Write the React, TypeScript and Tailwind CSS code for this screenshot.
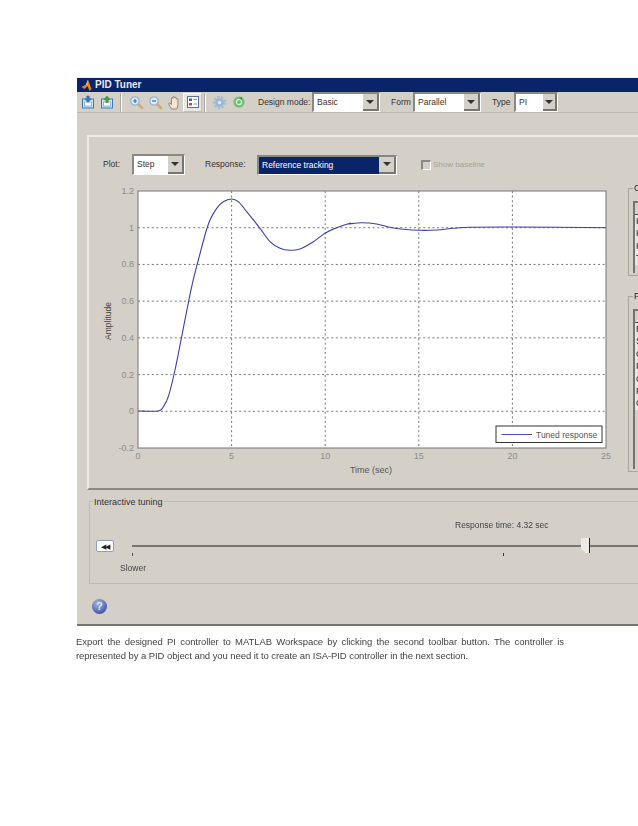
const zoomA: [number, number][] = [[205,693],[265,693],[280,680],[295,650],[315,570],[335,470],[365,320],[385,240],[405,165],[420,120],[440,85],[460,65],[485,57],[505,65],[530,95],[570,145],[600,185],[630,205],[660,211],[690,207],[730,185],[765,160],[800,143],[840,130]];
const zoomB: [number, number][] = [[25,132],[65,128],[110,132],[150,142],[190,148],[240,151],[290,150],[340,145],[390,142],[520,141],[798,143]];
// plot coordinates relative to the svg, whose top-left is page (93,181)
const curve: [number, number][] = [
  ...zoomA.map(([x, y]) => [70 + x / 3 - 93, 180 + y / 3 - 181] as [number, number]),
  ...zoomB.map(([x, y]) => [340 + x / 3 - 93, 180 + y / 3 - 181] as [number, number]),
];
function smooth(p: [number, number][]) {
  let d = `M${p[0][0].toFixed(1)} ${p[0][1].toFixed(1)}`;
  for (let i = 0; i < p.length - 1; i++) {
    const a = p[Math.max(i - 1, 0)], b = p[i], c = p[i + 1], e = p[Math.min(i + 2, p.length - 1)];
    d += `C${(b[0] + (c[0] - a[0]) / 6).toFixed(1)} ${(b[1] + (c[1] - a[1]) / 6).toFixed(1)} ${(c[0] - (e[0] - b[0]) / 6).toFixed(1)} ${(c[1] - (e[1] - b[1]) / 6).toFixed(1)} ${c[0].toFixed(1)} ${c[1].toFixed(1)}`;
  }
  return d;
}
const L = 45, T = 10, W = 468, H = 257;
const xt = [0, 5, 10, 15, 20, 25];
const yt = ["1.2", "1", "0.8", "0.6", "0.4", "0.2", "0", "-0.2"];

function Chart() {
  return (
    <svg width="535" height="299" className="shrink-0" style={{ fontFamily: "'Liberation Sans', sans-serif" }}>
      <rect x={L} y={T} width={W} height={H} fill="#fff" stroke="#777" strokeWidth="1" />
      {xt.slice(1, 5).map((t, i) => {
        const x = L + (W / 5) * (i + 1);
        return <line key={t} x1={x} x2={x} y1={T} y2={T + H} stroke="#777" strokeDasharray="2 2.6" />;
      })}
      {yt.slice(1, 7).map((_, i) => {
        const y = T + (H / 7) * (i + 1);
        return <line key={i} x1={L} x2={L + W} y1={y} y2={y} stroke="#777" strokeDasharray="2 2.6" />;
      })}
      {xt.map((t, i) => (
        <text key={t} x={L + (W / 5) * i} y={T + H + 11} fontSize="9" fill="#8c8c8c" textAnchor="middle">{t}</text>
      ))}
      {yt.map((t, i) => (
        <text key={t} x={L - 4} y={T + (H / 7) * i + 3} fontSize="9" fill="#8c8c8c" textAnchor="end">{t}</text>
      ))}
      <text x={L + W / 2 - 1} y={292} fontSize="9" fill="#555" textAnchor="middle">Time (sec)</text>
      <text transform="translate(18 140) rotate(-90)" fontSize="8.5" fill="#444" textAnchor="middle">Amplitude</text>
      <path d={smooth(curve)} fill="none" stroke="#3d3fa8" strokeWidth="1.1" />
      <rect x={403} y={245} width={106} height={16.5} fill="#fff" stroke="#333" />
      <line x1={408.5} x2={439} y1={253.5} y2={253.5} stroke="#4a4cc0" strokeWidth="1" />
      <text x={443} y={257} fontSize="8.5" fill="#555">Tuned response</text>
    </svg>
  );
}

function Combo({ label, w, a, sel, h = "h-[20px]" }: { label: string; w: string; a: string; sel?: boolean; h?: string }) {
  return (
    <div className={`flex ${w} ${h} shrink-0 border-t-2 border-l-2 border-t-[#8a8882] border-l-[#8a8882] border-b border-r border-b-white border-r-white ${sel ? "bg-[#d4d0c8]" : "bg-white"}`}>
      <div className={`flex-1 pl-[3px] text-[8.5px] leading-[16px] ${sel ? "bg-[#0a246a] text-white" : "text-[#333]"}`}>{label}</div>
      <div className={`${a} flex items-center justify-center bg-[#d4d0c8] border-r-2 border-b-2 border-r-[#77756f] border-b-[#77756f]`}>
        <div className="w-0 h-0 border-l-[4px] border-r-[4px] border-t-[4px] border-l-transparent border-r-transparent border-t-[#333]" />
      </div>
    </div>
  );
}

function Sep({ ml, mr }: { ml: string; mr: string }) {
  return <div className={`w-[2px] h-[19px] shrink-0 ${ml} ${mr} border-l border-l-[#a9a69f] border-r border-r-white`} />;
}

function ExportIcon({ up }: { up?: boolean }) {
  return (
    <svg width="14" height="14" viewBox="0 0 14 14" className="shrink-0">
      <rect x="1.5" y="4" width="11" height="9" fill="#cfe3f5" stroke="#3b78b5" />
      <rect x="3.5" y="7" width="7" height="4" fill="#fff" stroke="#6d9cc9" strokeWidth="0.7" />
      <path d={up ? "M7 1L10 4.5H8.2V7.5H5.8V4.5H4Z" : "M5.8 1H8.2V4H10L7 7.5L4 4H5.8Z"} fill={up ? "#4fa63c" : "#2f7fc4"} stroke={up ? "#2f7a24" : "#1f5a99"} strokeWidth="0.5" />
    </svg>
  );
}

function Magnifier({ plus }: { plus?: boolean }) {
  return (
    <svg width="15" height="15" viewBox="0 0 15 15" className="shrink-0">
      <path d="M8.5 8.5L13 13" stroke="#d9a866" strokeWidth="2.6" strokeLinecap="round" />
      <circle cx="6" cy="6" r="4.2" fill="#dcecf8" stroke="#8fb4d0" strokeWidth="1.2" />
      <path d={plus ? "M4 6H8M6 4V8" : "M4 6H8"} stroke="#3f6fb0" strokeWidth="1.2" />
    </svg>
  );
}

function Hand() {
  return (
    <svg width="15" height="15" viewBox="0 0 15 15" className="shrink-0">
      <path d="M4.5 14L1.8 9.2C1.3 8.2 2.6 7.6 3.3 8.4L4.4 9.6V3.4C4.4 2.4 5.8 2.4 5.9 3.4V2.2C5.9 1.1 7.5 1.1 7.6 2.2V3C7.7 2 9.2 2.1 9.2 3.2V4.2C9.4 3.2 10.9 3.4 10.9 4.5V9.5C10.9 11.5 10 13 9.6 14Z" fill="#f4e4d0" stroke="#77706a" strokeWidth="0.8" />
    </svg>
  );
}

function LegendBtn() {
  return (
    <div className="w-[19px] h-[19px] shrink-0 bg-[#e9e7e1] border-t border-l border-t-white border-l-white border-b border-r border-b-[#c2bfb7] border-r-[#c2bfb7] flex items-center justify-center">
      <svg width="12" height="12" viewBox="0 0 12 12">
        <rect x="0.5" y="0.5" width="11" height="11" fill="#fff" stroke="#5d6f9c" />
        <rect x="2" y="2.5" width="3" height="2.5" fill="#3c5fb5" />
        <rect x="2" y="7" width="3" height="2.5" fill="#d2433a" />
        <path d="M6.5 3.5H10M6.5 8H10" stroke="#8490b0" />
      </svg>
    </div>
  );
}

function Gear() {
  return (
    <svg width="15" height="15" viewBox="0 0 15 15" className="shrink-0">
      <circle cx="7.5" cy="7.5" r="5" fill="none" stroke="#a7bedb" strokeWidth="3.4" strokeDasharray="2.2 1.3" />
      <circle cx="7.5" cy="7.5" r="4.3" fill="#9db6d8" />
      <circle cx="7.5" cy="7.5" r="1.8" fill="#dfe8f3" />
    </svg>
  );
}

function GreenIcon() {
  return (
    <svg width="14" height="14" viewBox="0 0 14 14" className="shrink-0">
      <circle cx="7" cy="7" r="5.6" fill="#6fbf73" />
      <circle cx="7" cy="7" r="2.6" fill="none" stroke="#d9efd6" strokeWidth="1.3" />
      <path d="M7 3.5L10 1.6V5Z" fill="#3f9a4a" />
    </svg>
  );
}

function Group({ h, head, rows, mt }: { h: string; head: string; rows: string[]; mt: string }) {
  return (
    <div className={`relative ${h} ${mt} w-[30px] border-t border-l border-b border-[#a9a69f] pl-[4px] pt-[12px] pb-[2px]`}>
      <span className="absolute left-[4px] top-[-6px] bg-[#d4d0c8] px-[1px] text-[9px] leading-[11px] text-[#222]">{head}</span>
      <div className="h-full border-t-2 border-l-2 border-t-[#77756f] border-l-[#77756f] bg-[#d4d0c8]">
        <div className="h-[12px] border-b border-b-[#55534e]" />
        <div className="bg-[#e8e6e1]">
          {rows.map((r, i) => (
            <div key={i} className="h-[12.4px] pl-[1px] text-[9px] leading-[12.4px] text-[#222]">{r}</div>
          ))}
        </div>
      </div>
    </div>
  );
}

export default function App() {
  return (
    <div className="relative w-[638px] h-[826px] bg-white overflow-hidden pl-[77px] pt-[77px] font-['Liberation_Sans',sans-serif]">
      <div className="w-[561px] h-[549px] flex flex-col bg-[#d4d0c8] border-t border-t-[#efeeea] border-b-2 border-b-[#77756f] blur-[0.4px]">
        {/* title */}
        <div className="h-[14px] shrink-0 bg-[#0a246a] flex items-center pl-[4px] gap-[3px]">
          <svg width="11" height="13" viewBox="0 0 11 13" className="shrink-0">
            <path d="M0.5 8L5 5.5L7 0.5L10.5 10L8.5 12L6.5 7L3.5 10Z" fill="#e2832a" />
            <path d="M5 5.5L7 0.5L6.5 7Z" fill="#f7c46a" />
          </svg>
          <span className="text-[10px] font-bold text-[#e8e8ee] leading-[14px]">PID Tuner</span>
        </div>
        {/* toolbar */}
        <div className="h-[21px] shrink-0 flex items-center pl-[4px] border-b border-b-[#bcb9b1]">
          <ExportIcon />
          <div className="w-[5px] shrink-0" />
          <ExportIcon up />
          <Sep ml="ml-[6px]" mr="mr-[7px]" />
          <Magnifier plus />
          <div className="w-[4px] shrink-0" />
          <Magnifier />
          <div className="w-[4px] shrink-0" />
          <Hand />
          <div className="w-[1px] shrink-0" />
          <LegendBtn />
          <Sep ml="ml-[2px]" mr="mr-[6px]" />
          <Gear />
          <div className="w-[5px] shrink-0" />
          <GreenIcon />
          <span className="ml-[12px] w-[54px] shrink-0 text-[8.5px] text-[#333] whitespace-nowrap">Design mode:</span>
          <Combo label="Basic" w="w-[68px]" a="w-[16px]" />
          <span className="ml-[11px] w-[22px] shrink-0 text-[8.5px] text-[#333]">Form</span>
          <Combo label="Parallel" w="w-[68px]" a="w-[16px]" />
          <span className="ml-[11px] w-[22px] shrink-0 text-[8.5px] text-[#333]">Type</span>
          <Combo label="PI" w="w-[44px]" a="w-[14px]" />
        </div>
        <div className="h-[22px] shrink-0" />
        {/* main panel */}
        <div className="ml-[10px] h-[355px] shrink-0 border-t-2 border-l-2 border-t-[#eeece8] border-l-[#eeece8] border-b-2 border-b-[#8a8882]">
          <div className="flex items-center h-[21px] mt-[17px] pl-[14px]">
            <span className="w-[29px] shrink-0 text-[8.5px] text-[#333]">Plot:</span>
            <Combo label="Step" w="w-[53px]" a="w-[16px]" h="h-[21px]" />
            <span className="ml-[20px] w-[52px] shrink-0 text-[8.5px] text-[#333]">Response:</span>
            <Combo label="Reference tracking" w="w-[140px]" a="w-[17px]" sel />
            <div className="ml-[24px] w-[10px] h-[10px] shrink-0 border-t-2 border-l-2 border-t-[#8a8882] border-l-[#8a8882] border-b border-r border-b-white border-r-white" />
            <span className="ml-[2px] text-[8px] text-[#a3a19b] whitespace-nowrap">Show baseline</span>
          </div>
          <div className="flex mt-[6px] ml-[4px]">
            <Chart />
            <div className="flex flex-col pt-[7px]">
              <Group h="h-[88px]" mt="mt-0" head="C" rows={["K", "K", "K", "T"]} />
              <Group h="h-[176px]" mt="mt-[20px]" head="P" rows={["R", "S", "C", "P", "O", "P", "O"]} />
            </div>
          </div>
        </div>
        {/* interactive tuning */}
        <div className="relative ml-[12px] mt-[11px] h-[83px] shrink-0 border-t border-l border-b border-[#bdbab2]">
          <span className="absolute left-[3px] top-[-6px] bg-[#d4d0c8] px-[1px] text-[9px] leading-[12px] text-[#333]">Interactive tuning</span>
          <div className="pt-[18px] pl-[365px] text-[8.5px] leading-[11px] text-[#444] whitespace-nowrap">Response time: 4.32 sec</div>
          <div className="flex items-center mt-[9px] pl-[6px] h-[12px]">
            <div className="w-[18px] h-[12px] shrink-0 rounded-[2px] border border-[#8aa0c0] bg-white flex items-center justify-center">
              <span className="text-[7px] leading-none text-[#222] tracking-[-1px]">◀◀</span>
            </div>
            <div className="relative ml-[18px] flex-1 h-[2px] bg-[#77756f]">
              <div className="absolute left-[449px] top-[-7px] w-[9px] h-[15px] bg-[#eceae5] border-r border-r-[#222]" style={{ clipPath: "polygon(0 0,100% 0,100% 100%,50% 100%,0 70%)" }} />
              <div className="absolute left-0 top-[8px] w-px h-[3px] bg-[#555]" />
              <div className="absolute left-[371px] top-[8px] w-px h-[3px] bg-[#333]" />
            </div>
          </div>
          <div className="pl-[30px] pt-[11px] text-[8.5px] leading-[11px] text-[#444]">Slower</div>
        </div>
        {/* help */}
        <div className="pl-[15px] pt-[15px]">
          <div className="w-[15px] h-[15px] rounded-full flex items-center justify-center text-[11px] font-bold text-[#dfe6f5] leading-none bg-[radial-gradient(circle_at_40%_30%,#a9b9e6,#3e56a8_75%)]">?</div>
        </div>
      </div>
      {/* paragraph */}
      <p className="-ml-px mt-[9px] w-[488px] text-[9.5px] leading-[14px] text-[#444] text-justify tracking-[-0.07px] blur-[0.2px]">
        Export the designed PI controller to MATLAB Workspace by clicking the second toolbar button. The controller is represented by a PID object and you need it to create an ISA-PID controller in the next section.
      </p>
    </div>
  );
}
